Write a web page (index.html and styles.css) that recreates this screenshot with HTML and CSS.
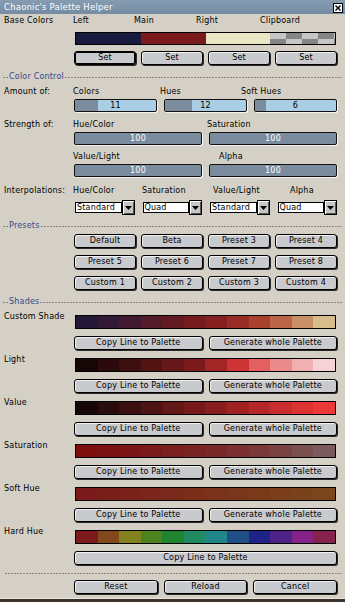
FILE: index.html
```html
<!DOCTYPE html>
<html>
<head>
<meta charset="utf-8">
<link rel="stylesheet" href="styles.css">
</head>
<body>
<div class="window">
  <div class="titlebar">
    <span class="title">Chaonic's Palette Helper</span>
    <svg class="close" width="10" height="10" viewBox="0 0 10 10"><rect x="0.5" y="0.5" width="9" height="9" fill="#fff" stroke="#000"/><path d="M2.5 2.5 L7.5 7.5 M7.5 2.5 L2.5 7.5" stroke="#000" stroke-width="1.4"/></svg>
  </div>
  <div class="content">
    <div class="labels labels-base"><span>Base Colors</span><span>Left</span><span>Main</span><span>Right</span><span>Clipboard</span></div>
    <div class="colorbar">
      <div class="seg c-navy"></div><div class="seg c-red"></div><div class="seg c-cream"></div><div class="seg c-checker"></div>
    </div>
    <div class="field grid4 set-row">
      <div class="btn focus">Set</div><div class="btn">Set</div><div class="btn">Set</div><div class="btn">Set</div>
    </div>

    <div class="section"><span class="dash"></span><span class="sec-title">Color Control</span><span class="line"></span></div>
    <div class="labels labels-amount"><span>Amount of:</span><span>Colors</span><span>Hues</span><span>Soft Hues</span></div>
    <div class="field grid3 slider-row">
      <div class="slider"><div class="fill" style="width:29%"></div><span>11</span></div>
      <div class="slider"><div class="fill" style="width:33%"></div><span>12</span></div>
      <div class="slider"><div class="fill" style="width:13%"></div><span>6</span></div>
    </div>
    <div class="labels labels-strength"><span>Strength of:</span><span>Hue/Color</span><span>Saturation</span></div>
    <div class="field grid2 slider-row">
      <div class="slider full"><span>100</span></div>
      <div class="slider full"><span>100</span></div>
    </div>
    <div class="labels labels-value"><span></span><span>Value/Light</span><span>Alpha</span></div>
    <div class="field grid2 slider-row">
      <div class="slider full"><span>100</span></div>
      <div class="slider full"><span>100</span></div>
    </div>
    <div class="labels labels-interp"><span>Interpolations:</span><span>Hue/Color</span><span>Saturation</span><span>Value/Light</span><span>Alpha</span></div>
    <div class="field grid4 dd-row">
      <div class="dropdown"><div class="dd-box">Standard</div><div class="dd-btn"><svg width="11" height="13" viewBox="0 0 11 13"><path d="M2 5 H9 L5.5 9 Z" fill="#000"/></svg></div></div>
      <div class="dropdown"><div class="dd-box">Quad</div><div class="dd-btn"><svg width="11" height="13" viewBox="0 0 11 13"><path d="M2 5 H9 L5.5 9 Z" fill="#000"/></svg></div></div>
      <div class="dropdown"><div class="dd-box">Standard</div><div class="dd-btn"><svg width="11" height="13" viewBox="0 0 11 13"><path d="M2 5 H9 L5.5 9 Z" fill="#000"/></svg></div></div>
      <div class="dropdown"><div class="dd-box">Quad</div><div class="dd-btn"><svg width="11" height="13" viewBox="0 0 11 13"><path d="M2 5 H9 L5.5 9 Z" fill="#000"/></svg></div></div>
    </div>

    <div class="section sec-presets"><span class="dash"></span><span class="sec-title">Presets</span><span class="line"></span></div>
    <div class="field grid4 preset-grid">
      <div class="btn">Default</div><div class="btn">Beta</div><div class="btn">Preset 3</div><div class="btn">Preset 4</div>
      <div class="btn">Preset 5</div><div class="btn">Preset 6</div><div class="btn">Preset 7</div><div class="btn">Preset 8</div>
      <div class="btn">Custom 1</div><div class="btn">Custom 2</div><div class="btn">Custom 3</div><div class="btn">Custom 4</div>
    </div>

    <div class="section"><span class="dash"></span><span class="sec-title">Shades</span><span class="line"></span></div>

    <div class="shade first">
      <div class="shade-row"><span class="shade-label">Custom Shade</span>
        <div class="shadebar">
          <i style="background:#231838"></i><i style="background:#321a36"></i><i style="background:#421a30"></i><i style="background:#531a2a"></i><i style="background:#641a23"></i><i style="background:#751b1e"></i><i style="background:#861f1f"></i><i style="background:#982b24"></i><i style="background:#a8422f"></i><i style="background:#bc6548"></i><i style="background:#c98f66"></i><i style="background:#d8bd8c"></i>
        </div>
      </div>
      <div class="field grid2b"><div class="btn">Copy Line to Palette</div><div class="btn">Generate whole Palette</div></div>
    </div>

    <div class="shade">
      <div class="shade-row"><span class="shade-label">Light</span>
        <div class="shadebar">
          <i style="background:#170606"></i><i style="background:#2a0a0a"></i><i style="background:#3c0e0e"></i><i style="background:#521313"></i><i style="background:#661717"></i><i style="background:#7a1a1a"></i><i style="background:#a32626"></i><i style="background:#cf3434"></i><i style="background:#e46060"></i><i style="background:#ea8a8a"></i><i style="background:#f0b0b0"></i><i style="background:#f5d2d5"></i>
        </div>
      </div>
      <div class="field grid2b"><div class="btn">Copy Line to Palette</div><div class="btn">Generate whole Palette</div></div>
    </div>

    <div class="shade">
      <div class="shade-row"><span class="shade-label">Value</span>
        <div class="shadebar">
          <i style="background:#150707"></i><i style="background:#2a0b0b"></i><i style="background:#3b0f0f"></i><i style="background:#4f1313"></i><i style="background:#631717"></i><i style="background:#781a1a"></i><i style="background:#8a1e1e"></i><i style="background:#a02323"></i><i style="background:#b42828"></i><i style="background:#c92d2d"></i><i style="background:#dc3232"></i><i style="background:#ee3838"></i>
        </div>
      </div>
      <div class="field grid2b"><div class="btn">Copy Line to Palette</div><div class="btn">Generate whole Palette</div></div>
    </div>

    <div class="shade">
      <div class="shade-row"><span class="shade-label">Saturation</span>
        <div class="shadebar">
          <i style="background:#7c0e0e"></i><i style="background:#7b1212"></i><i style="background:#7a1616"></i><i style="background:#7a1a1a"></i><i style="background:#7a1e1e"></i><i style="background:#7a2323"></i><i style="background:#7a2929"></i><i style="background:#7a3030"></i><i style="background:#7a3939"></i><i style="background:#7a4343"></i><i style="background:#7a4f50"></i><i style="background:#7a5a5c"></i>
        </div>
      </div>
      <div class="field grid2b"><div class="btn">Copy Line to Palette</div><div class="btn">Generate whole Palette</div></div>
    </div>

    <div class="shade">
      <div class="shade-row"><span class="shade-label">Soft Hue</span>
        <div class="shadebar">
          <i style="background:#7a1a1a"></i><i style="background:#7a1e1a"></i><i style="background:#7a221a"></i><i style="background:#7a261a"></i><i style="background:#7a2a1a"></i><i style="background:#7a2e1a"></i><i style="background:#7a321a"></i><i style="background:#7a361a"></i><i style="background:#7a3a1a"></i><i style="background:#7a3e1a"></i><i style="background:#7a421a"></i><i style="background:#7a461c"></i>
        </div>
      </div>
      <div class="field grid2b"><div class="btn">Copy Line to Palette</div><div class="btn">Generate whole Palette</div></div>
    </div>

    <div class="shade">
      <div class="shade-row"><span class="shade-label">Hard Hue</span>
        <div class="shadebar">
          <i style="background:#7d1a1a"></i><i style="background:#824a1c"></i><i style="background:#83811e"></i><i style="background:#4e8420"></i><i style="background:#218530"></i><i style="background:#218a62"></i><i style="background:#21868a"></i><i style="background:#214f88"></i><i style="background:#212288"></i><i style="background:#4f2288"></i><i style="background:#852288"></i><i style="background:#85224e"></i>
        </div>
      </div>
      <div class="field single"><div class="btn">Copy Line to Palette</div></div>
    </div>

    <div class="separator"></div>
    <div class="field grid3b">
      <div class="btn">Reset</div><div class="btn">Reload</div><div class="btn">Cancel</div>
    </div>
  </div>
  <div class="bottom-strip"></div>
</div>
</body>
</html>
```
FILE: styles.css
```css
html, body {
  margin: 0;
  padding: 0;
}
body {
  background: #d5d0c5;
  font-family: "DejaVu Sans", "Liberation Sans", sans-serif;
  font-size: 8px;
  letter-spacing: 0.2px;
  color: #000;
}
.window {
  width: 345px;
  height: 602px;
  display: flex;
  flex-direction: column;
  background: #d5d0c5;
  overflow: hidden;
}
.titlebar {
  height: 14px;
  flex: none;
  background: linear-gradient(#859cb2, #748ba2);
  display: flex;
  align-items: center;
  justify-content: space-between;
  padding: 0 2px 0 4px;
  color: #fff;
  line-height: 14px;
  font-size: 8.5px;
}
.close {
  display: block;
  margin-top: 1px;
}
.content {
  flex: 1;
  padding: 0 8px 0 4px;
}
.labels {
  display: grid;
  height: 12px;
  line-height: 12px;
  white-space: nowrap;
}
.labels-base { grid-template-columns: 69px 61px 62px 64px auto; margin-top: 1px; }
.labels-amount { grid-template-columns: 69px 87px 81px auto; margin-top: 3px; }
.labels-strength { grid-template-columns: 69px 134px auto; margin-top: 7px; }
.labels-value { grid-template-columns: 69px 146px auto; margin-top: 6px; }
.labels-interp { grid-template-columns: 69px 69px 71px 77px auto; margin-top: 8px; }

.field { margin-left: 70px; }
.field.single { margin-top: 7px; }

.colorbar {
  margin: 5px 1px 0 71px;
  height: 13px;
  box-sizing: border-box;
  border: 1px solid #000;
  display: flex;
}
.seg { flex: 1; }
.c-navy { background: #191a40; }
.c-red { background: #7a1b1a; }
.c-cream { background: #e9e6c3; }
.c-checker {
  background: conic-gradient(#858585 25%, #c6c6c6 0 50%, #858585 0 75%, #c6c6c6 0) 0 0 / 32px 12px;
}

.grid4 { display: grid; grid-template-columns: repeat(4, 1fr); column-gap: 5px; }
.grid3 { display: grid; grid-template-columns: repeat(3, 1fr); column-gap: 7px; }
.grid2 { display: grid; grid-template-columns: repeat(2, 1fr); column-gap: 7px; }
.grid2b { display: grid; grid-template-columns: repeat(2, 1fr); column-gap: 6px; margin-top: 7px; }
.grid3b { display: grid; grid-template-columns: repeat(3, 1fr); column-gap: 6px; margin-top: 6px; }

.btn {
  height: 14px;
  box-sizing: border-box;
  border: 1px solid #000;
  border-radius: 3px;
  background: #c9cacd;
  box-shadow: inset 1px 1px 0 #f2f2f2, 1px 1px 0 #2a2a2a;
  text-align: center;
  line-height: 12px;
  white-space: nowrap;
}
.btn.focus {
  box-shadow: inset 0 0 0 1px #000, 1px 1px 0 #2a2a2a;
}
.set-row { margin-top: 6px; }

.section {
  display: flex;
  align-items: center;
  height: 12px;
  line-height: 12px;
  margin: 6px -5px 0 -1px;
}
.sec-presets { margin-top: 5px; }
.dash {
  width: 5px;
  height: 1px;
  margin-right: 1px;
  background: repeating-linear-gradient(to right, #8a857e 0 2px, transparent 2px 3px);
}
.sec-title { color: #34488a; }
.line {
  flex: 1;
  height: 1px;
  margin-left: 1px;
  background: repeating-linear-gradient(to right, #8a857e 0 2px, transparent 2px 3px);
}

.slider-row { margin-top: 1px; }
.slider {
  position: relative;
  height: 13px;
  box-sizing: border-box;
  border: 1px solid #111;
  border-radius: 2px;
  background: #aacee6;
  box-shadow: 1px 1px 0 #f4f4f4;
  overflow: hidden;
}
.slider .fill {
  position: absolute;
  left: 0;
  top: 0;
  bottom: 0;
  background: #7a8c9e;
}
.slider span {
  position: relative;
  display: block;
  text-align: center;
  line-height: 11px;
}
.slider.full { background: #7a8c9e; color: #fff; }

.dd-row { margin-top: 3px; column-gap: 7px; }
.dropdown {
  display: flex;
  align-items: center;
  height: 15px;
  margin-left: 1px;
}
.dd-box {
  flex: 1;
  height: 11px;
  box-sizing: border-box;
  background: #fff;
  border: 1px solid #000;
  line-height: 9px;
  padding-left: 1px;
  overflow: hidden;
  white-space: nowrap;
}
.dd-btn {
  width: 13px;
  height: 15px;
  box-sizing: border-box;
  background: #c6c6c6;
  border: 1px solid #000;
  box-shadow: inset 1px 1px 0 #fff, inset -1px -1px 0 #555;
}
.dd-btn svg { display: block; }

.preset-grid { margin-top: 2px; row-gap: 7px; }

.shade { margin-top: 8px; }
.shade.first { margin-top: 7px; }
.shade-row {
  display: grid;
  grid-template-columns: 70px 1fr;
  align-items: start;
}
.shade-label {
  line-height: 12px;
  margin-top: -4px;
  white-space: nowrap;
}
.shadebar {
  margin: 0 1px 0 1px;
  height: 14px;
  box-sizing: border-box;
  border: 1px solid #000;
  display: flex;
}
.shadebar i { flex: 1; }

.separator {
  margin: 8px -5px 0 1px;
  height: 1px;
  background: repeating-linear-gradient(to right, #8a857e 0 2px, transparent 2px 3px);
}
.bottom-strip {
  flex: none;
  height: 4px;
  background: #3a332d;
  border-top: 1px solid #e8e4dc;
  box-sizing: border-box;
}
```
